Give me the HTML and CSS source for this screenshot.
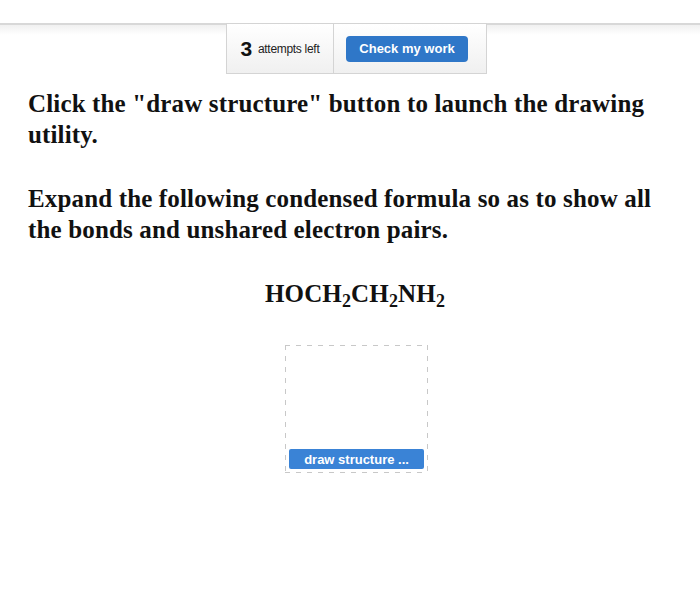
FILE: index.html
```html
<!DOCTYPE html>
<html lang="en">

<head>
  <meta charset="UTF-8">
  <title>Question</title>
  <link rel="stylesheet" href="styles.css">
</head>

<body>
  <div class="topbar">
    <div class="toolbar">
      <div class="attempts"><span class="num">3</span> attempts left</div>
      <div class="check"><button class="check-btn">Check my work</button></div>
    </div>
  </div>

  <main class="question">
    <p>Click the "draw structure" button to launch the drawing utility.</p>
    <p>Expand the following condensed formula so as to show all the bonds and unshared electron pairs.</p>
    <p class="formula">HOCH<sub>2</sub>CH<sub>2</sub>NH<sub>2</sub></p>

    <div class="drawbox">
      <button class="draw-btn">draw structure ...</button>
    </div>
  </main>
</body>

</html>
```

FILE: styles.css
```css
* {
  box-sizing: border-box;
  margin: 0;
  padding: 0;
}

body {
  background: white;
  color: #111;
  font-family: "Liberation Serif", "Times New Roman", serif;
}

.topbar {
  margin-top: 23px;
  border-top: 2px solid #d8d8d8;
  background: linear-gradient(#f0f0f0, white 10px);
  display: flex;
  justify-content: center;
  padding-left: 13px;
}

.toolbar {
  display: flex;
  margin-top: -2px;
  height: 51px;
  border: 1px solid #d4d4d4;
  background: linear-gradient(white, #f0f0f0);
  font-family: "Liberation Sans", Arial, sans-serif;
}

.attempts {
  width: 107px;
  display: flex;
  align-items: center;
  justify-content: center;
  gap: 6px;
  font-size: 12px;
  letter-spacing: -0.3px;
  color: #222;
  border-right: 1px solid #d4d4d4;
}

.attempts .num {
  font-size: 21px;
  font-weight: bold;
  color: #111;
}

.check {
  width: 152px;
  display: flex;
  align-items: center;
  padding-left: 12px;
}

.check-btn {
  background: #2f77c8;
  color: white;
  border: none;
  border-radius: 4px;
  font-family: "Liberation Sans", Arial, sans-serif;
  font-weight: bold;
  font-size: 13px;
  width: 122px;
  height: 26px;
}

.question {
  padding: 14px 28px;
  font-size: 25px;
  font-weight: bold;
  line-height: 31px;
  letter-spacing: 0.15px;
}

.question p {
  margin-bottom: 33px;
}

.question .formula {
  text-align: center;
  padding-left: 10px;
  margin-bottom: 36px;
}

.formula sub {
  font-size: 18px;
  vertical-align: -5px;
  line-height: 0;
}

/* dashed frame with long dashes, like the drawing area */
.drawbox {
  width: 143px;
  height: 128px;
  margin-left: 257px;
  background:
    repeating-linear-gradient(90deg, #c8c8c8 0 5px, transparent 5px 11px) top left / 100% 1px no-repeat,
    repeating-linear-gradient(90deg, #c8c8c8 0 5px, transparent 5px 11px) bottom left / 100% 1px no-repeat,
    repeating-linear-gradient(180deg, #c8c8c8 0 5px, transparent 5px 11px) top left / 1px 100% no-repeat,
    repeating-linear-gradient(180deg, #c8c8c8 0 5px, transparent 5px 11px) top right / 1px 100% no-repeat;
  display: flex;
  align-items: flex-end;
  justify-content: center;
  padding-bottom: 4px;
}

.draw-btn {
  width: 135px;
  height: 20px;
  background: #3a83d6;
  color: white;
  border: none;
  border-radius: 2px;
  font-family: "Liberation Sans", Arial, sans-serif;
  font-weight: bold;
  font-size: 13px;
}
```
